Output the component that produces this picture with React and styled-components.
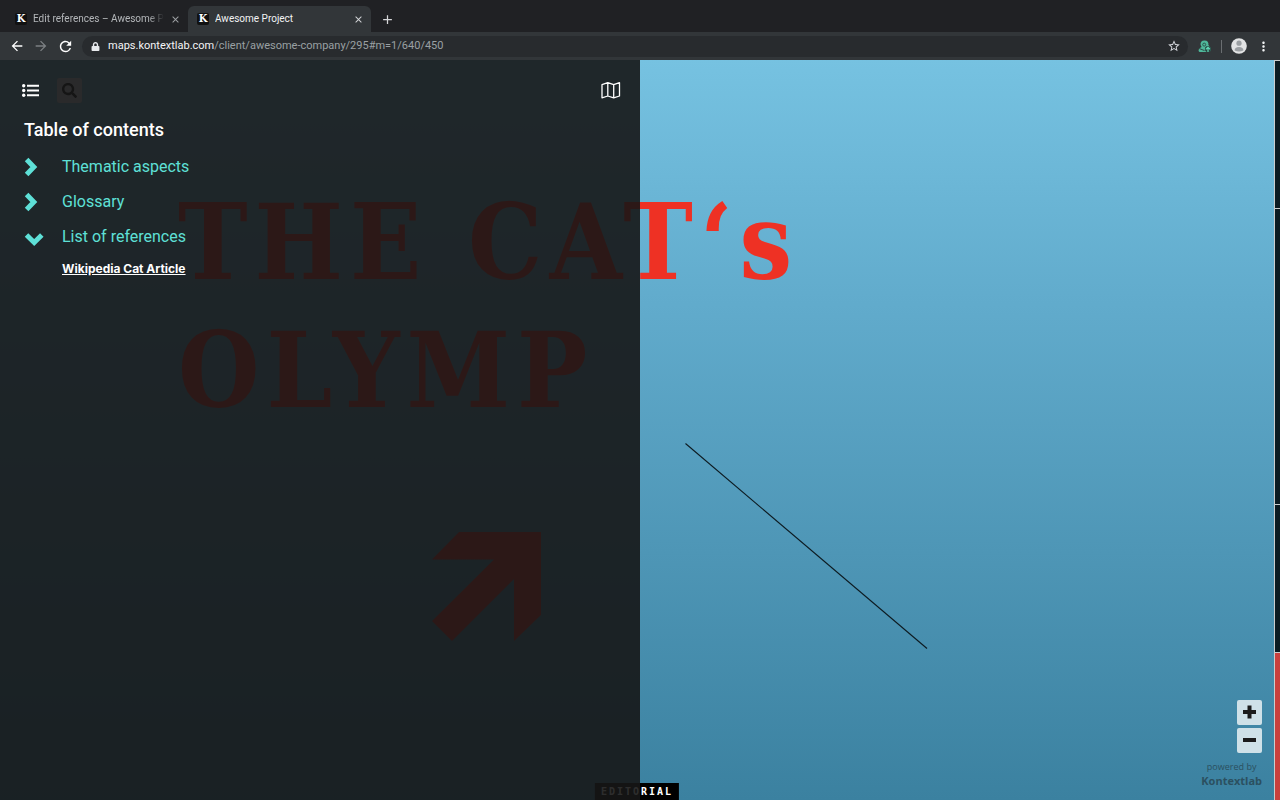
import React, { useState } from "react";
import styled, { createGlobalStyle } from "styled-components";
import { FaSearch, FaLock } from "react-icons/fa";
import { MdArrowBack, MdArrowForward, MdRefresh, MdClose, MdAdd, MdStarBorder, MdMoreVert } from "react-icons/md";

const tabs = [
    { id: 1, title: "Edit references – Awesome Project", active: false },
    { id: 2, title: "Awesome Project", active: true },
]

const chapters = [
    { id: 1, title: "Thematic aspects", items: [] },
    { id: 2, title: "Glossary", items: [] },
    { id: 3, title: "List of references", items: ["Wikipedia Cat Article"] },
]

export default function App(){
    return (
        <Page>
            <GlobalStyle />
            <BrowserBar />
            <Stage>
                <MapCanvas />
                <Overview aria-hidden="true">
                    <OverviewCell $grow={148} />
                    <OverviewCell $grow={296} />
                    <OverviewCell $grow={148} />
                    <OverviewCell $grow={148} $color="#c9403d" />
                </Overview>
                <Sidebar />
            </Stage>
        </Page>
    )
}

function BrowserBar(){
    return (
        <header>
            <TabStrip>
                {tabs.map(tab => (
                    <Tab key={tab.id} $active={tab.active}>
                        <Favicon>K</Favicon>
                        <TabTitle $active={tab.active}>{tab.title}</TabTitle>
                        <BarButton aria-label="Close tab" $color={tab.active ? "#d5d7d9" : "#9fa2a5"}><MdClose size={11} /></BarButton>
                    </Tab>
                ))}
                <NewTab aria-label="New tab"><MdAdd size={15} /></NewTab>
            </TabStrip>
            <Toolbar>
                <NavButtons>
                    <BarButton aria-label="Back" $color="#ffffff"><MdArrowBack size={16} /></BarButton>
                    <BarButton aria-label="Forward" $color="#7c8083"><MdArrowForward size={16} /></BarButton>
                    <BarButton aria-label="Reload" $color="#ffffff"><MdRefresh size={17} /></BarButton>
                </NavButtons>
                <AddressBar>
                    <FaLock size={9} color="#e8eaed" />
                    <Address><b>maps.kontextlab.com</b>/client/awesome-company/295#m=1/640/450</Address>
                    <BarButton aria-label="Bookmark" $color="#d5d7dc"><MdStarBorder size={14} /></BarButton>
                </AddressBar>
                <Tools>
                    <BarButton aria-label="Extension"><ExtensionIcon /></BarButton>
                    <Divider />
                    <BarButton aria-label="Profile"><AvatarIcon /></BarButton>
                    <BarButton aria-label="Menu" $color="#f1f3f4"><MdMoreVert size={15} /></BarButton>
                </Tools>
            </Toolbar>
        </header>
    )
}

function MapCanvas(){
    return (
        <Canvas>
            <MapTitle>THE CAT‘s<br />OLYMP</MapTitle>
            <Arrow viewBox="0 0 110 110" aria-hidden="true">
                <path d="M27 0H109V83L82 109V47L20 109L0 89L62 27.5H0Z" fill="#ee3124" />
            </Arrow>
            <Connection viewBox="0 0 243 207" aria-hidden="true">
                <path d="M0.5 0.5L242 205.5" stroke="#0d1a20" strokeWidth="1.1" />
            </Connection>
            <Chapter>EDITORIAL</Chapter>
            <Corner>
                <ZoomButton aria-label="Zoom in"><ZoomIcon plus /></ZoomButton>
                <ZoomButton aria-label="Zoom out"><ZoomIcon /></ZoomButton>
                <Powered href="#">powered by<strong>Kontextlab</strong></Powered>
            </Corner>
        </Canvas>
    )
}

function Sidebar(){
    const [open, setOpen] = useState([3])

    const toggle = id => {
        setOpen(open.includes(id) ? open.filter(item => item !== id) : [...open, id])
    }

    return (
        <Panel>
            <PanelBar>
                <IconButton aria-label="Table of contents"><ListIcon /></IconButton>
                <SearchButton aria-label="Search"><FaSearch size={15} /></SearchButton>
                <IconButton aria-label="Map"><MapIcon /></IconButton>
            </PanelBar>
            <PanelTitle>Table of contents</PanelTitle>
            {chapters.map(chapter => (
                <section key={chapter.id}>
                    <ChapterButton aria-expanded={open.includes(chapter.id)} onClick={() => toggle(chapter.id)}>
                        <Chevron open={open.includes(chapter.id)} />
                        {chapter.title}
                    </ChapterButton>
                    {open.includes(chapter.id) && chapter.items.map(item => (
                        <Reference key={item} href="#">{item}</Reference>
                    ))}
                </section>
            ))}
        </Panel>
    )
}

function Chevron({ open }){
    return (
        <svg width="20" height="20" viewBox="0 0 20 20" fill="none" stroke="#5ee0d7" strokeWidth="5" aria-hidden="true">
            {open ? <path d="M2.5 8L10.2 15.5L17.8 8" /> : <path d="M2.6 2.6L9.8 10L2.6 17.4" />}
        </svg>
    )
}

function ZoomIcon({ plus }){
    return (
        <svg width="15" height="15" viewBox="0 0 15 15" fill="none" stroke="#1c1c1c" strokeWidth="4" aria-hidden="true">
            <path d={plus ? "M1 7H14M7.5 0.5V13.5" : "M1 7H14"} />
        </svg>
    )
}

function ListIcon(){
    return (
        <svg width="17" height="13" viewBox="0 0 17 13" fill="#fff" aria-hidden="true">
            <circle cx="1.7" cy="1.8" r="1.7" />
            <circle cx="1.7" cy="6.5" r="1.7" />
            <circle cx="1.7" cy="11.2" r="1.7" />
            <path d="M5 0.7H17V2.7H5ZM5 5.5H17V7.5H5ZM5 10.2H17V12.2H5Z" />
        </svg>
    )
}

function MapIcon(){
    return (
        <svg width="20" height="17" viewBox="0 0 20 17" fill="none" stroke="#fff" strokeWidth="1.3" strokeLinejoin="round" aria-hidden="true">
            <path d="M1 2.6L6.8 0.7L12.7 2.6L18.5 0.7V14L12.7 15.9L6.8 14L1 15.9ZM6.8 0.7V14M12.7 2.6V15.9" />
        </svg>
    )
}

function ExtensionIcon(){
    return (
        <svg width="14" height="13" viewBox="0 0 14 13" aria-hidden="true">
            <path d="M2.6 5Q2 0.5 6.5 0.4Q11 0.5 10.4 5L13 8Q13.6 12 9.5 12H1.5Q0 10.6 1 8.4L3.6 7Z" fill="#4fb89b" />
            <circle cx="6.2" cy="4.6" r="1.5" fill="none" stroke="#26423d" strokeWidth="0.8" />
            <path d="M1.2 8.5L6.5 10.6" fill="none" stroke="#26423d" strokeWidth="0.9" />
            <circle cx="10" cy="9" r="3.1" fill="#26423d" />
            <path d="M10 12V7.4M7.8 9.4L10 7.2L12.2 9.4" fill="none" stroke="#5cd3b2" strokeWidth="1.3" />
        </svg>
    )
}

function AvatarIcon(){
    return (
        <svg width="16" height="16" viewBox="0 0 16 16" aria-hidden="true">
            <circle cx="8" cy="8" r="7.8" fill="#e2e3e4" />
            <circle cx="8" cy="5.2" r="2.6" fill="#9b9fa3" />
            <path d="M3.6 12.6Q3.6 9 8 9T12.4 12.6Q8 14.6 3.6 12.6Z" fill="#9b9fa3" />
        </svg>
    )
}

const GlobalStyle = createGlobalStyle`
*, *::before, *::after {
    box-sizing: border-box;
}
body {
    margin: 0;
    font-family: Roboto, "Liberation Sans", sans-serif;
}
button {
    font: inherit;
    padding: 0;
    border: 0;
    background: none;
    cursor: pointer;
}
svg {
    display: block;
    flex: none;
}
`;

const Page = styled.div`
display: flex;
flex-direction: column;
min-height: 100vh;
`;

//========================Style for browser bar=========================
const TabStrip = styled.div`
display: flex;
height: 32px;
padding: 6px 8px 0;
background: #202124;
`;

const Tab = styled.div`
display: flex;
align-items: center;
gap: 6px;
width: ${props => props.$active ? "183px" : "180px"};
padding: 0 7px 0 ${props => props.$active ? "9px" : "7px"};
border-radius: 6px 6px 0 0;
background: ${props => props.$active ? "#323639" : "transparent"};
`;

const Favicon = styled.span`
flex: none;
width: 12px;
height: 12px;
border-radius: 2px;
background: #111111;
color: #ffffff;
font: bold 11px/12px "DejaVu Serif Condensed", "DejaVu Serif", serif;
text-align: center;
`;

const TabTitle = styled.span`
flex: 1;
overflow: hidden;
white-space: nowrap;
font-size: 10px;
line-height: 14px;
color: ${props => props.$active ? "#f1f3f4" : "#b4b7ba"};
mask-image: ${props => props.$active ? "none" : "linear-gradient(90deg, #000 88%, transparent)"};
`;

const BarButton = styled.button`
display: flex;
flex: none;
color: ${props => props.$color};
`;

const NewTab = styled(BarButton)`
align-items: center;
padding: 0 9px;
color: #d5d7d9;
`;

const Toolbar = styled.div`
display: flex;
align-items: center;
height: 28px;
padding: 0 9px;
background: #323639;
`;

const NavButtons = styled.div`
display: flex;
align-items: center;
gap: 8px;
width: 73px;
`;

const AddressBar = styled.div`
display: flex;
flex: 1;
align-items: center;
gap: 8px;
height: 21px;
padding: 0 7px 0 9px;
border-radius: 11px;
background: #282b2e;
`;

const Address = styled.span`
flex: 1;
font-size: 11px;
line-height: 16px;
color: #9aa0a3;
>b{
    font-weight: 400;
    color: #f4f5f6;
}
`;

const Tools = styled.div`
display: flex;
align-items: center;
gap: 9px;
margin-left: 10px;
`;

const Divider = styled.span`
width: 1px;
height: 13px;
background: #6a6e71;
`;

//========================Style for map=========================
const Stage = styled.main`
position: relative;
display: flex;
flex: 1;
`;

const Canvas = styled.div`
position: relative;
flex: 1;
overflow: hidden;
background: linear-gradient(#76c2e1, #61abcc 33%, #3b81a0);
`;

const MapTitle = styled.h1`
position: absolute;
top: 119px;
left: 178px;
margin: 0;
font-family: "DejaVu Serif Condensed", "DejaVu Serif", serif;
font-weight: 700;
font-size: 104px;
line-height: 128px;
letter-spacing: 7px;
white-space: nowrap;
color: #ee3124;
`;

const Arrow = styled.svg`
position: absolute;
top: 472px;
left: 432px;
width: 110px;
height: 110px;
`;

const Connection = styled.svg`
position: absolute;
top: 383px;
left: 685px;
width: 243px;
height: 207px;
`;

const Chapter = styled.div`
position: absolute;
bottom: 0;
left: 50%;
transform: translateX(-50%);
padding: 0 6px;
background: #000000;
color: #ffffff;
font: bold 10px/17px "DejaVu Sans Mono", monospace;
letter-spacing: 2px;
`;

const Corner = styled.div`
position: absolute;
right: 12px;
bottom: 12px;
display: flex;
flex-direction: column;
align-items: flex-end;
gap: 3px;
`;

const ZoomButton = styled.button`
display: grid;
place-items: center;
width: 25px;
height: 25px;
border-radius: 2px;
background: #cfe1e8;
`;

const Powered = styled.a`
display: flex;
flex-direction: column;
align-items: center;
margin-top: 3px;
font-family: "Open Sans", sans-serif;
font-size: 9px;
line-height: 15px;
text-decoration: none;
color: #2b5060;
>strong{
    font-size: 11px;
    line-height: 14px;
}
`;

const Overview = styled.div`
display: flex;
flex-direction: column;
width: 6px;
border-left: 1px solid #c9cdce;
`;

const OverviewCell = styled.div`
flex: ${props => props.$grow};
border-top: 1px solid #c9cdce;
background: ${props => props.$color || "#0b1b22"};
`;

//========================Style for sidebar=========================
const Panel = styled.nav`
position: absolute;
top: 0;
bottom: 0;
left: 0;
width: 50%;
padding: 18px 19px 0 22px;
background: rgba(22, 22, 22, 0.9);
`;

const PanelBar = styled.div`
display: flex;
align-items: center;
gap: 18px;
>:last-child{
    margin-left: auto;
}
`;

const IconButton = styled.button`
display: grid;
place-items: center;
height: 25px;
color: #ffffff;
`;

const SearchButton = styled(IconButton)`
width: 25px;
border-radius: 2px;
background: #2a2a2b;
color: #151515;
`;

const PanelTitle = styled.h2`
margin: 14px 2px 6px;
font-weight: 500;
font-size: 18px;
line-height: 26px;
color: #ffffff;
`;

const ChapterButton = styled.button`
display: flex;
align-items: center;
gap: 18px;
height: 35px;
padding-left: 2px;
font-size: 16px;
color: #5ee0d7;
`;

const Reference = styled.a`
display: block;
margin: 6px 40px;
font-family: Inter, "Liberation Sans", sans-serif;
font-weight: 700;
font-size: 12px;
line-height: 18px;
color: #ffffff;
`;
